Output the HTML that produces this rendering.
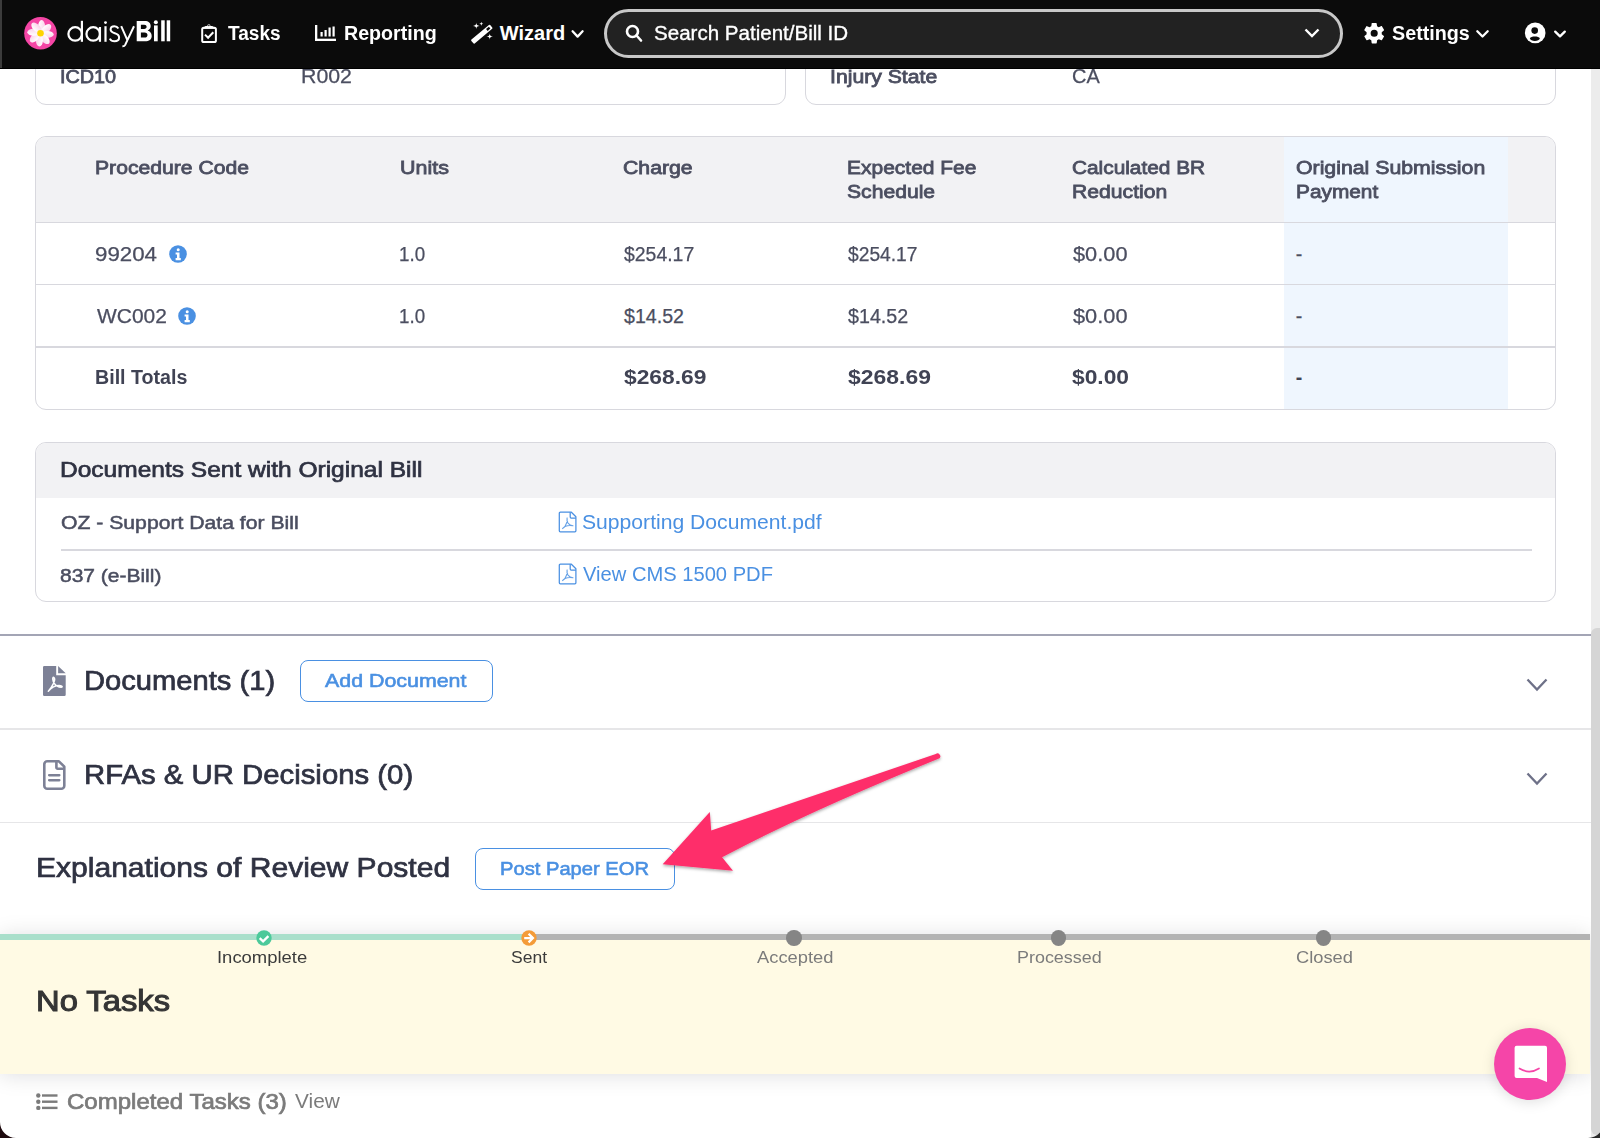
<!DOCTYPE html>
<html><head><meta charset="utf-8">
<style>
*{margin:0;padding:0;box-sizing:border-box}
html,body{width:1600px;height:1138px;overflow:hidden;background:#fff}
body{position:relative;font-family:"Liberation Sans",sans-serif;color:#4b4e60}
.a{position:absolute;white-space:nowrap;line-height:1}
.b{font-weight:bold}
.sb{-webkit-text-stroke:0.8px currentColor}
.sb2{-webkit-text-stroke:1px currentColor}
.sb3{-webkit-text-stroke:1.3px currentColor}
.r{position:absolute}
.nv{z-index:8}
</style></head>
<body>
<!-- top partial cards -->
<div class="r" style="left:35px;top:30px;width:751px;height:74.5px;border:1.5px solid #d8d8de;border-radius:11px"></div>
<div class="r" style="left:805px;top:30px;width:751px;height:74.5px;border:1.5px solid #d8d8de;border-radius:11px"></div>

<!-- TABLE CARD -->
<div class="r" style="left:35px;top:136px;width:1521px;height:274px;border:1.5px solid #d8d8de;border-radius:11px;overflow:hidden;background:#fff">
  <div class="r" style="left:0;top:0;width:100%;height:85.5px;background:#f2f2f4"></div>
  <div class="r" style="left:1247.5px;top:0;width:224.5px;height:100%;background:#eff6fe"></div>
  <div class="r" style="left:0;top:84.85px;width:100%;height:1.5px;background:#d8d8de"></div>
  <div class="r" style="left:0;top:146.85px;width:100%;height:1.5px;background:#d8d8de"></div>
  <div class="r" style="left:0;top:209.25px;width:100%;height:1.5px;background:#d8d8de"></div>
</div>
<svg class="a" style="left:169px;top:244.5px" width="18" height="18" viewBox="0 0 18 18"><circle cx="9" cy="9" r="8.8" fill="#4a90e2"/><circle cx="9.2" cy="4.7" r="1.5" fill="#fff"/><path d="M6.6 7.4h3.9v5.6h1.3v2.2H6.6V13h1.4V9.5H6.6z" fill="#fff"/></svg>
<svg class="a" style="left:178px;top:306.5px" width="18" height="18" viewBox="0 0 18 18"><circle cx="9" cy="9" r="8.8" fill="#4a90e2"/><circle cx="9.2" cy="4.7" r="1.5" fill="#fff"/><path d="M6.6 7.4h3.9v5.6h1.3v2.2H6.6V13h1.4V9.5H6.6z" fill="#fff"/></svg>

<!-- DOCS SENT CARD -->
<div class="r" style="left:35px;top:442px;width:1521px;height:160px;border:1.5px solid #d8d8de;border-radius:11px;overflow:hidden;background:#fff">
  <div class="r" style="left:0;top:0;width:100%;height:55px;background:#f2f2f4"></div>
  <div class="r" style="left:24.5px;top:106px;width:1471px;height:1.5px;background:#d8d8de"></div>
</div>
<svg class="a" style="left:558px;top:511px" width="19" height="22" viewBox="0 0 19 22" fill="none" stroke="#4a90e2" stroke-width="1.25" stroke-linejoin="round"><path d="M2.3 1.2H13.4L17.9 5.7V19.8A1 1 0 0116.9 20.8H2.3A1 1 0 011.3 19.8V2.2A1 1 0 012.3 1.2z"/><path d="M12.2 1.2V6.1A1 1 0 0013.2 7.1H17.9"/><path d="M4.3 17.8Q7.6 15.9 8.8 11.5Q9.5 8.4 9.05 6.9Q8.5 9.6 10 12.1Q11.8 14.6 15 14.7Q10.5 13.9 7.6 15.3Q5.6 16.3 4.3 17.8" stroke-width="1.05" stroke-opacity=".85"/></svg>
<svg class="a" style="left:558px;top:563px" width="19" height="22" viewBox="0 0 19 22" fill="none" stroke="#4a90e2" stroke-width="1.25" stroke-linejoin="round"><path d="M2.3 1.2H13.4L17.9 5.7V19.8A1 1 0 0116.9 20.8H2.3A1 1 0 011.3 19.8V2.2A1 1 0 012.3 1.2z"/><path d="M12.2 1.2V6.1A1 1 0 0013.2 7.1H17.9"/><path d="M4.3 17.8Q7.6 15.9 8.8 11.5Q9.5 8.4 9.05 6.9Q8.5 9.6 10 12.1Q11.8 14.6 15 14.7Q10.5 13.9 7.6 15.3Q5.6 16.3 4.3 17.8" stroke-width="1.05" stroke-opacity=".85"/></svg>

<!-- page divider -->
<div class="r" style="left:0;top:633.5px;width:1591px;height:2px;background:#a3a5b5"></div>

<!-- Documents section -->
<svg class="a" style="left:43.1px;top:665.8px" width="23" height="31" viewBox="0 0 23 31"><path d="M1.3 0H13.2v9.3h9.5v19.5a1.3 1.3 0 01-1.3 1.3H1.3A1.3 1.3 0 010 28.8V1.3A1.3 1.3 0 011.3 0z" fill="#7d8196"/><path d="M15.1 0L22.7 7.2H15.1z" fill="#7d8196"/><path d="M5.3 25.2C7 23.5 9 20.5 10.4 17.6 11.6 15 12 12 10.7 11.4 9.3 10.9 9.5 14.6 11.3 17.4 12.9 19.9 15.6 21.2 18.3 21.3 19.6 21.3 19.4 19.9 17.6 19.7 14 19.3 8.8 21.3 5.3 25.2Z" fill="none" stroke="#fff" stroke-width="1.5" stroke-linejoin="round"/></svg>
<div class="r" style="left:299.5px;top:660px;width:193.5px;height:41.5px;border:1.6px solid #4a90e2;border-radius:8px"></div>
<svg class="a" style="left:1526px;top:677px" width="22" height="15" viewBox="0 0 22 15" fill="none" stroke="#6e7188" stroke-width="2.3"><path d="M1.5 2.5l9.5 10 9.5-10"/></svg>
<div class="r" style="left:0;top:728px;width:1591px;height:1.5px;background:#e6e6e8"></div>

<!-- RFAs section -->
<svg class="a" style="left:43.2px;top:760.4px" width="23" height="31" viewBox="0 0 23 31" fill="none" stroke="#7d8196" stroke-width="2.6"><path d="M4.3 1.3H15.9L21.3 6.7V25.75A3 3 0 0118.3 28.75H4.3A3 3 0 011.3 25.75V4.3A3 3 0 014.3 1.3z" stroke-linejoin="round"/><path d="M13.4 1.3V7.5a1.2 1.2 0 001.2 1.2H21.3" stroke-linejoin="round"/><path d="M6.1 15.25h10.3M6.1 20.25h10.3" stroke-width="2.3" stroke-linecap="round"/></svg>
<svg class="a" style="left:1526px;top:771px" width="22" height="15" viewBox="0 0 22 15" fill="none" stroke="#6e7188" stroke-width="2.3"><path d="M1.5 2.5l9.5 10 9.5-10"/></svg>
<div class="r" style="left:0;top:821.8px;width:1591px;height:1.5px;background:#e6e6e8"></div>

<!-- EOR -->
<div class="r" style="left:474.5px;top:848px;width:200px;height:41.5px;border:1.6px solid #4a90e2;border-radius:8px"></div>

<!-- TASK PROGRESS -->
<div class="r" style="left:0;top:937px;width:1590px;height:137px;background:#fffae4;box-shadow:0 0 22px rgba(0,0,25,.15)"></div>
<div class="r" style="left:0;top:934px;width:528px;height:5.5px;background:#a9dfcb"></div>
<div class="r" style="left:528px;top:934px;width:1062px;height:5.5px;background:#b3b3b3"></div>
<svg class="a" style="left:255.5px;top:929.8px" width="16" height="16" viewBox="0 0 16 16"><circle cx="8" cy="8" r="7.7" fill="#4cc99a"/><path d="M3.7 8.2L7.1 11.4L12.4 6.1" fill="none" stroke="#fff" stroke-width="2.3"/></svg>
<svg class="a" style="left:520.6px;top:929.8px" width="16" height="16" viewBox="0 0 16 16"><circle cx="8" cy="8" r="7.7" fill="#f49b38"/><path d="M3.2 8.1H12M7.6 3.7L11.9 8.1L7.6 12.4" fill="none" stroke="#fff" stroke-width="2.3"/></svg>
<div class="r" style="left:786.2px;top:930px;width:15.5px;height:15.5px;border-radius:50%;background:#858585"></div>
<div class="r" style="left:1050.7px;top:930px;width:15.5px;height:15.5px;border-radius:50%;background:#858585"></div>
<div class="r" style="left:1315.7px;top:930px;width:15.5px;height:15.5px;border-radius:50%;background:#858585"></div>

<!-- completed icon -->
<svg class="a" style="left:36px;top:1093px" width="22" height="18" viewBox="0 0 22 18" fill="#7b7b7b"><circle cx="2.3" cy="2.5" r="2.2"/><circle cx="2.3" cy="8.7" r="2.2"/><circle cx="2.3" cy="14.9" r="2.2"/><rect x="6" y="1.3" width="15.5" height="2.4"/><rect x="6" y="7.5" width="15.5" height="2.4"/><rect x="6" y="13.7" width="15.5" height="2.4"/></svg>

<div class="a b nv" id="nTasks" style="left:227.68px;top:22.97px;font-size:20px;color:#fff;transform:scaleX(0.9522);transform-origin:0 0">Tasks</div>
<div class="a b nv" id="nRep" style="left:343.60px;top:22.97px;font-size:20px;color:#fff;transform:scaleX(0.9821);transform-origin:0 0">Reporting</div>
<div class="a b nv" id="nWiz" style="left:499.86px;top:22.97px;font-size:20px;color:#fff">Wizard</div>
<div class="a nv" id="nSearch" style="left:653.75px;top:22.80px;font-size:20px;color:#fff;transform:scaleX(1.0272);transform-origin:0 0;-webkit-text-stroke:0.35px #fff">Search Patient/Bill ID</div>
<div class="a b nv" id="nSet" style="left:1391.70px;top:22.97px;font-size:20px;color:#fff;transform:scaleX(0.9867);transform-origin:0 0">Settings</div>
<div class="a" id="icd" style="left:60.15px;top:67.74px;font-size:18.8px;color:#4b4e60;transform:scaleX(1.0537);transform-origin:0 0;-webkit-text-stroke:0.8px #4b4e60">ICD10</div>
<div class="a" id="r002" style="left:300.78px;top:67.15px;font-size:19.5px;color:#4b4e60;transform:scaleX(1.0934);transform-origin:0 0;-webkit-text-stroke:0.25px #4b4e60">R002</div>
<div class="a" id="inj" style="left:830.40px;top:67.74px;font-size:18.8px;color:#4b4e60;transform:scaleX(1.1284);transform-origin:0 0;-webkit-text-stroke:0.8px #4b4e60">Injury State</div>
<div class="a" id="ca" style="left:1072.37px;top:67.39px;font-size:19.5px;color:#4b4e60;transform:scaleX(1.0238);transform-origin:0 0;-webkit-text-stroke:0.25px #4b4e60">CA</div>
<div class="a" id="hPC" style="left:95.30px;top:158.79px;font-size:18.8px;color:#4b4e60;transform:scaleX(1.1261);transform-origin:0 0;-webkit-text-stroke:0.8px #4b4e60">Procedure Code</div>
<div class="a" id="hUn" style="left:399.66px;top:158.82px;font-size:18.8px;color:#4b4e60;transform:scaleX(1.1419);transform-origin:0 0;-webkit-text-stroke:0.8px #4b4e60">Units</div>
<div class="a" id="hCh" style="left:623.33px;top:158.98px;font-size:18.8px;color:#4b4e60;transform:scaleX(1.1312);transform-origin:0 0;-webkit-text-stroke:0.8px #4b4e60">Charge</div>
<div class="a" id="hEF1" style="left:847.30px;top:158.79px;font-size:18.8px;color:#4b4e60;transform:scaleX(1.1171);transform-origin:0 0;-webkit-text-stroke:0.8px #4b4e60">Expected Fee</div>
<div class="a" id="hEF2" style="left:847.17px;top:182.82px;font-size:18.8px;color:#4b4e60;transform:scaleX(1.1246);transform-origin:0 0;-webkit-text-stroke:0.8px #4b4e60">Schedule</div>
<div class="a" id="hBR1" style="left:1071.96px;top:158.95px;font-size:18.8px;color:#4b4e60;transform:scaleX(1.1086);transform-origin:0 0;-webkit-text-stroke:0.8px #4b4e60">Calculated BR</div>
<div class="a" id="hBR2" style="left:1071.60px;top:182.79px;font-size:18.8px;color:#4b4e60;transform:scaleX(1.1264);transform-origin:0 0;-webkit-text-stroke:0.8px #4b4e60">Reduction</div>
<div class="a" id="hOS1" style="left:1295.54px;top:158.98px;font-size:18.8px;color:#4b4e60;transform:scaleX(1.1330);transform-origin:0 0;-webkit-text-stroke:0.8px #4b4e60">Original Submission</div>
<div class="a" id="hOS2" style="left:1295.66px;top:182.79px;font-size:18.8px;color:#4b4e60;transform:scaleX(1.1098);transform-origin:0 0;-webkit-text-stroke:0.8px #4b4e60">Payment</div>
<div class="a" id="c0" style="left:94.85px;top:244.75px;font-size:19.6px;color:#4b4e60;transform:scaleX(1.1375);transform-origin:0 0;-webkit-text-stroke:0.25px #4b4e60">99204</div>
<div class="a" id="u0" style="left:398.60px;top:244.72px;font-size:19.6px;color:#4b4e60;transform:scaleX(0.9593);transform-origin:0 0;-webkit-text-stroke:0.25px #4b4e60">1.0</div>
<div class="a" id="c1" style="left:96.58px;top:306.90px;font-size:19.6px;color:#4b4e60;transform:scaleX(1.0706);transform-origin:0 0;-webkit-text-stroke:0.25px #4b4e60">WC002</div>
<div class="a" id="u1" style="left:398.60px;top:306.90px;font-size:19.6px;color:#4b4e60;transform:scaleX(0.9593);transform-origin:0 0;-webkit-text-stroke:0.25px #4b4e60">1.0</div>
<div class="a" id="ch0" style="left:624.39px;top:244.72px;font-size:19.6px;color:#4b4e60;transform:scaleX(0.9912);transform-origin:0 0;-webkit-text-stroke:0.25px #4b4e60">$254.17</div>
<div class="a" id="ef0" style="left:848.22px;top:244.72px;font-size:19.6px;color:#4b4e60;transform:scaleX(0.9810);transform-origin:0 0;-webkit-text-stroke:0.25px #4b4e60">$254.17</div>
<div class="a" id="br0" style="left:1072.62px;top:244.72px;font-size:19.6px;color:#4b4e60;transform:scaleX(1.1122);transform-origin:0 0;-webkit-text-stroke:0.25px #4b4e60">$0.00</div>
<div class="a" id="os0" style="left:1295.63px;top:244.72px;font-size:19.6px;color:#4b4e60;-webkit-text-stroke:0.25px #4b4e60">-</div>
<div class="a" id="ch1" style="left:624.06px;top:306.90px;font-size:19.6px;color:#4b4e60;-webkit-text-stroke:0.25px #4b4e60">$14.52</div>
<div class="a" id="ef1" style="left:848.06px;top:306.90px;font-size:19.6px;color:#4b4e60;transform:scaleX(1.0055);transform-origin:0 0;-webkit-text-stroke:0.25px #4b4e60">$14.52</div>
<div class="a" id="br1" style="left:1072.62px;top:306.90px;font-size:19.6px;color:#4b4e60;transform:scaleX(1.1122);transform-origin:0 0;-webkit-text-stroke:0.25px #4b4e60">$0.00</div>
<div class="a" id="os1" style="left:1295.63px;top:306.90px;font-size:19.6px;color:#4b4e60;-webkit-text-stroke:0.25px #4b4e60">-</div>
<div class="a b" id="bt" style="left:95.21px;top:368.43px;font-size:19.6px;color:#404354;transform:scaleX(1.0026);transform-origin:0 0">Bill Totals</div>
<div class="a b" id="ch2" style="left:624.08px;top:368.43px;font-size:19.6px;color:#404354;transform:scaleX(1.1632);transform-origin:0 0">$268.69</div>
<div class="a b" id="ef2" style="left:848.08px;top:368.43px;font-size:19.6px;color:#404354;transform:scaleX(1.1703);transform-origin:0 0">$268.69</div>
<div class="a b" id="br2" style="left:1071.91px;top:368.43px;font-size:19.6px;color:#404354;transform:scaleX(1.1629);transform-origin:0 0">$0.00</div>
<div class="a b" id="os2" style="left:1295.74px;top:368.43px;font-size:19.6px;color:#404354">-</div>
<div class="a" id="dsT" style="left:59.97px;top:458.87px;font-size:21.6px;color:#2f3242;transform:scaleX(1.1352);transform-origin:0 0;-webkit-text-stroke:0.7px #2f3242">Documents Sent with Original Bill</div>
<div class="a" id="oz" style="left:60.62px;top:513.77px;font-size:18.3px;color:#4b4e60;transform:scaleX(1.1580);transform-origin:0 0;-webkit-text-stroke:0.5px #4b4e60">OZ - Support Data for Bill</div>
<div class="a" id="e837" style="left:60.09px;top:566.77px;font-size:18.3px;color:#4b4e60;transform:scaleX(1.1471);transform-origin:0 0;-webkit-text-stroke:0.5px #4b4e60">837 (e-Bill)</div>
<div class="a" id="l1" style="left:581.90px;top:513.23px;font-size:19.6px;color:#4a90e2;transform:scaleX(1.0786);transform-origin:0 0">Supporting Document.pdf</div>
<div class="a" id="l2" style="left:582.80px;top:565.19px;font-size:19.6px;color:#4a90e2;transform:scaleX(1.0281);transform-origin:0 0">View CMS 1500 PDF</div>
<div class="a" id="hDoc" style="left:83.86px;top:666.77px;font-size:27.5px;color:#2f3242;transform:scaleX(1.0597);transform-origin:0 0;-webkit-text-stroke:0.7px #2f3242">Documents (1)</div>
<div class="a" id="bAdd" style="left:325.22px;top:671.12px;font-size:19.0px;color:#4a90e2;transform:scaleX(1.1254);transform-origin:0 0;-webkit-text-stroke:0.6px #4a90e2">Add Document</div>
<div class="a" id="hRfa" style="left:83.70px;top:760.62px;font-size:27.5px;color:#2f3242;transform:scaleX(1.0663);transform-origin:0 0;-webkit-text-stroke:0.7px #2f3242">RFAs &amp; UR Decisions (0)</div>
<div class="a" id="hEor" style="left:35.92px;top:854.11px;font-size:27.5px;color:#2f3242;transform:scaleX(1.0924);transform-origin:0 0;-webkit-text-stroke:0.7px #2f3242">Explanations of Review Posted</div>
<div class="a" id="bEor" style="left:499.54px;top:859.12px;font-size:19.0px;color:#4a90e2;transform:scaleX(1.0609);transform-origin:0 0;-webkit-text-stroke:0.6px #4a90e2">Post Paper EOR</div>
<div class="a" id="sInc" style="left:217.44px;top:948.62px;font-size:16.4px;color:#3b3b3b;transform:scaleX(1.1254);transform-origin:0 0">Incomplete</div>
<div class="a" id="sSent" style="left:510.74px;top:948.62px;font-size:16.4px;color:#3b3b3b;transform:scaleX(1.0684);transform-origin:0 0">Sent</div>
<div class="a" id="sAcc" style="left:756.56px;top:948.62px;font-size:16.4px;color:#7b7b7b;transform:scaleX(1.1181);transform-origin:0 0">Accepted</div>
<div class="a" id="sPro" style="left:1016.60px;top:948.62px;font-size:16.4px;color:#7b7b7b;transform:scaleX(1.0936);transform-origin:0 0">Processed</div>
<div class="a" id="sClo" style="left:1295.80px;top:948.62px;font-size:16.4px;color:#7b7b7b;transform:scaleX(1.1158);transform-origin:0 0">Closed</div>
<div class="a" id="noT" style="left:36.14px;top:985.61px;font-size:30.3px;color:#353535;transform:scaleX(1.0809);transform-origin:0 0;-webkit-text-stroke:1.05px #353535">No Tasks</div>
<div class="a" id="comp" style="left:66.56px;top:1090.84px;font-size:21.6px;color:#7b7b7b;transform:scaleX(1.1123);transform-origin:0 0;-webkit-text-stroke:0.7px #7b7b7b">Completed Tasks (3)</div>
<div class="a" id="view" style="left:294.62px;top:1091.93px;font-size:19.5px;color:#7b7b7b;transform:scaleX(1.0682);transform-origin:0 0">View</div>

<!-- ARROW -->
<svg class="a" style="left:0;top:0;z-index:3" width="1600" height="1138" viewBox="0 0 1600 1138">
  <defs><filter id="sh" x="-10%" y="-10%" width="120%" height="140%"><feDropShadow dx="0" dy="1.5" stdDeviation="1.5" flood-color="#000" flood-opacity=".35"/></filter></defs>
  <path d="M711.2 830.4 L935.8 754 A2.85 2.85 0 0 1 939.6 758.2 Q805 813 722.1 857.3 L733 870.7 L662.7 864.3 L709.8 812 Z" fill="#fe2e6b" filter="url(#sh)"/>
</svg>

<!-- chat -->
<div class="r" style="left:1494.3px;top:1027.5px;width:72px;height:72px;border-radius:50%;background:#f545a8;box-shadow:0 2px 14px rgba(0,0,0,.13);z-index:4"></div>
<svg class="a" style="left:1512px;top:1043px;z-index:4" width="36" height="42" viewBox="0 0 36 42"><path d="M5 2.8h28a2 2 0 012 2V39l-10-4H4.6a2 2 0 01-2-2V4.8a2 2 0 012-2z" transform="translate(0,0)" fill="#fff"/><path d="M7.5 25.5c6 3.8 13.5 3.8 19.5 0" fill="none" stroke="#f545a8" stroke-width="1.7" stroke-linecap="round"/></svg>

<!-- NAV -->
<div class="r" style="left:0;top:0;width:1600px;height:69px;background:#0b0b0b;border-bottom:1.5px solid #000;z-index:5">
  <div class="r" style="left:0;top:0;width:2px;height:68px;background:#3c3c3c"></div>
  <svg class="a" style="left:24px;top:17px" width="33" height="33" viewBox="0 0 33 33">
    <circle cx="16.5" cy="16.3" r="16.3" fill="#f545a5"/>
    <defs><linearGradient id="pg" x1="0" y1="0" x2="1" y2="0"><stop offset="0" stop-color="#fff"/><stop offset="1" stop-color="#fbd3ea"/></linearGradient></defs>
    <g fill="url(#pg)">
      <ellipse cx="17.6" cy="9.3" rx="3.5" ry="6.2"  transform="rotate(0 16.5 16.3)"/>
      <ellipse cx="17.6" cy="9.3" rx="3.5" ry="6.2"  transform="rotate(45 16.5 16.3)"/>
      <ellipse cx="17.6" cy="9.3" rx="3.5" ry="6.2"  transform="rotate(90 16.5 16.3)"/>
      <ellipse cx="17.6" cy="9.3" rx="3.5" ry="6.2"  transform="rotate(135 16.5 16.3)"/>
      <ellipse cx="17.6" cy="9.3" rx="3.5" ry="6.2"  transform="rotate(180 16.5 16.3)"/>
      <ellipse cx="17.6" cy="9.3" rx="3.5" ry="6.2"  transform="rotate(225 16.5 16.3)"/>
      <ellipse cx="17.6" cy="9.3" rx="3.5" ry="6.2"  transform="rotate(270 16.5 16.3)"/>
      <ellipse cx="17.6" cy="9.3" rx="3.5" ry="6.2"  transform="rotate(315 16.5 16.3)"/>
    </g>
    <circle cx="16.5" cy="16.3" r="3.3" fill="#ffd400"/>
  </svg>
  <svg class="a" style="left:0;top:0" width="180" height="60" viewBox="0 0 180 60">
    <g fill="none" stroke="#fff" stroke-width="2.2">
      <circle cx="75.15" cy="33.95" r="6.75"/><path d="M81.9 20.8V41.8"/>
      <circle cx="93.2" cy="33.95" r="6.75"/><path d="M99.95 27V41.8"/>
      <path d="M105.5 26.2V41.8"/>
      <path d="M118.4 28.6C117.5 27 116.1 26.2 114.4 26.2 112.1 26.2 110.6 27.6 110.6 29.5 110.6 31.6 112.4 32.5 114.8 33.2 117.5 34 119.1 35.2 119.1 37.5 119.1 39.9 117.1 41.3 114.5 41.3 112.4 41.3 110.7 40.3 109.8 38.6" stroke-width="2"/>
      <path d="M121.2 26.2L127.6 40.6M134 26.2L125.2 44.9C124.7 45.9 123.9 46.4 122.4 46.3" stroke-width="2"/>
    </g>
    <circle cx="105.5" cy="22.6" r="1.45" fill="#fff"/>
    <path fill="#fff" fill-rule="evenodd" d="M136.7 20.9H144.7C148.6 20.9 150.7 22.9 150.7 26 150.7 28.2 149.5 29.8 147.6 30.5 150.1 31.2 151.7 33.2 151.7 35.9 151.7 39.3 149.2 41.3 145 41.3H136.7ZM140.9 24.7V28.9H144.2C145.7 28.9 146.6 28.1 146.6 26.8 146.6 25.5 145.7 24.7 144.2 24.7ZM140.9 32.4V37.5H144.6C146.4 37.5 147.5 36.6 147.5 34.95 147.5 33.3 146.4 32.4 144.6 32.4Z"/>
    <rect x="154" y="25.4" width="3.7" height="15.9" fill="#fff"/><circle cx="155.85" cy="22.3" r="2" fill="#fff"/>
    <rect x="161.2" y="20.3" width="3.5" height="21" fill="#fff"/><rect x="166.7" y="20.3" width="3.5" height="21" fill="#fff"/>
  </svg>
  <svg class="a" style="left:200px;top:22px" width="18" height="22" viewBox="0 0 18 22">
    <rect x="2.2" y="5.7" width="13.7" height="14.3" rx="1.6" fill="none" stroke="#fff" stroke-width="2"/>
    <path d="M1.6 6.8L5.6 3.9H7.3A1.6 1.6 0 0 1 10.5 3.9H12.2L16.4 6.8Z" fill="#fff"/>
    <circle cx="8.9" cy="3.4" r="0.75" fill="#0b0b0b"/>
    <path d="M5 12.6L8.1 15.8L13.3 10.3" fill="none" stroke="#fff" stroke-width="2"/>
  </svg>
  <svg class="a" style="left:315px;top:25px" width="21" height="16" viewBox="0 0 21 16" fill="#fff">
    <rect x="0" y="0" width="2.3" height="16"/><rect x="0" y="13.7" width="21" height="2.3"/>
    <rect x="5.5" y="7" width="2.2" height="4.5"/><rect x="9.5" y="5" width="2.2" height="6.5"/><rect x="13.5" y="2.5" width="2.2" height="9"/><rect x="17.5" y="1.5" width="2.2" height="10"/>
  </svg>
  <svg class="a" style="left:460px;top:15px" width="40" height="35" viewBox="460 15 40 35">
    <g transform="translate(481.8 34.2) rotate(-40)"><rect x="-12.3" y="-2.5" width="24.6" height="5" rx="0.9" fill="#fff"/><rect x="6.6" y="-1.2" width="3.6" height="2.4" fill="#0b0b0b"/></g>
    <path fill="#fff" d="M476.3 22.6Q476.3 25.9 479.6 25.9Q476.3 25.9 476.3 29.2Q476.3 25.9 473 25.9Q476.3 25.9 476.3 22.6Z"/>
    <path fill="#fff" d="M481.3 21.8Q481.3 23.8 483.3 23.8Q481.3 23.8 481.3 25.8Q481.3 23.8 479.3 23.8Q481.3 23.8 481.3 21.8Z"/>
    <path fill="#fff" d="M489.7 33.2Q489.7 36.5 493 36.5Q489.7 36.5 489.7 39.8Q489.7 36.5 486.4 36.5Q489.7 36.5 489.7 33.2Z"/>
  </svg>
  
  <div class="r" style="left:604px;top:9px;width:738.5px;height:48.5px;border:3px solid #c8c8c8;border-radius:25px;background:#222"></div>
  <svg class="a" style="left:625px;top:24px" width="18" height="19" viewBox="0 0 18 19" fill="none" stroke="#fff" stroke-width="2.6"><circle cx="7.5" cy="7.5" r="5.5"/><path d="M11.5 11.5l4.5 5" stroke-linecap="round"/></svg>
  <svg class="a" style="left:1304px;top:28px" width="16" height="10" viewBox="0 0 16 10" fill="none" stroke="#fff" stroke-width="2.4"><path d="M1.5 1.5l6.5 6.5 6.5-6.5"/></svg>
  <svg class="a" style="left:1362px;top:21px" width="24.4" height="24.4" viewBox="0 0 24 24" fill="#fff"><path d="M19.4 13c.04-.33.06-.66.06-1s-.02-.67-.06-1l2.1-1.650c.19-.15.24-.42.12-.64l-2-3.46c-.12-.22-.39-.3-.61-.22l-2.49 1c-.52-.4-1.080-.73-1.69-.98l-.38-2.65A.49.49 0 0014 2h-4c-.25 0-.46.18-.49.42l-.38 2.65c-.61.25-1.17.59-1.69.98l-2.49-1a.5.5 0 00-.61.22l-2 3.46c-.13.22-.07.49.12.64L4.57 11c-.04.33-.07.67-.07 1s.03.67.07 1l-2.11 1.65c-.19.15-.24.42-.12.64l2 3.46c.12.22.39.3.61.22l2.49-1c.52.4 1.08.73 1.69.98l.38 2.65c.03.24.24.42.49.42h4c.25 0 .46-.18.49-.42l.38-2.65c.61-.25 1.17-.59 1.69-.98l2.49 1c.23.09.49 0 .61-.22l2-3.46c.12-.22.07-.49-.12-.64L19.4 13zM12 15.5A3.5 3.5 0 1112 8.5a3.5 3.5 0 010 7z"/></svg>
  
  <svg class="a" style="left:1524px;top:22px" width="22" height="22" viewBox="0 0 22 22"><circle cx="11.2" cy="10.9" r="10.3" fill="#fff"/><circle cx="10.7" cy="8.6" r="3.3" fill="#0b0b0b"/><path d="M5.8 16.3C6.6 14.9 8.4 14.4 10.85 14.4S15.1 14.9 15.9 16.3C15.4 18 13.4 18.9 10.85 18.9S6.3 18 5.8 16.3z" fill="#0b0b0b"/></svg>
  
  <svg class="a" style="left:0;top:0" width="1600" height="60" viewBox="0 0 1600 60" fill="none" stroke="#fff" stroke-width="2.3" stroke-linecap="round" stroke-linejoin="round">
    <path d="M572.6 31.3L577.6 36.6L582.6 31.3"/><path d="M1477.3 31.3L1482.5 36.5L1487.7 31.3"/><path d="M1555.2 31.6L1560 36.4L1564.8 31.6"/>
  </svg>
  <!--NAVTEXT-->
</div>

<!-- scrollbar -->
<div class="r" style="left:1591px;top:69px;width:9px;height:1069px;background:#ececec;z-index:6"></div>
<div class="r" style="left:1591px;top:627.5px;width:9px;height:507px;background:#d5d5d5;border-radius:6px 0 0 6px;z-index:6"></div>

<!-- window corners -->
<svg class="a" style="left:0;top:1122px;z-index:7" width="16" height="16" viewBox="0 0 16 16"><path d="M0 0A16 16 0 0016 16H0z" fill="#1e0a0e"/></svg>
<svg class="a" style="left:1580px;top:1118px;z-index:7" width="20" height="20" viewBox="1580 1118 20 20"><path d="M1600 1132.6A16 16 0 0 1 1588 1138H1600Z" fill="#2a2a2a"/></svg>
</body></html>
